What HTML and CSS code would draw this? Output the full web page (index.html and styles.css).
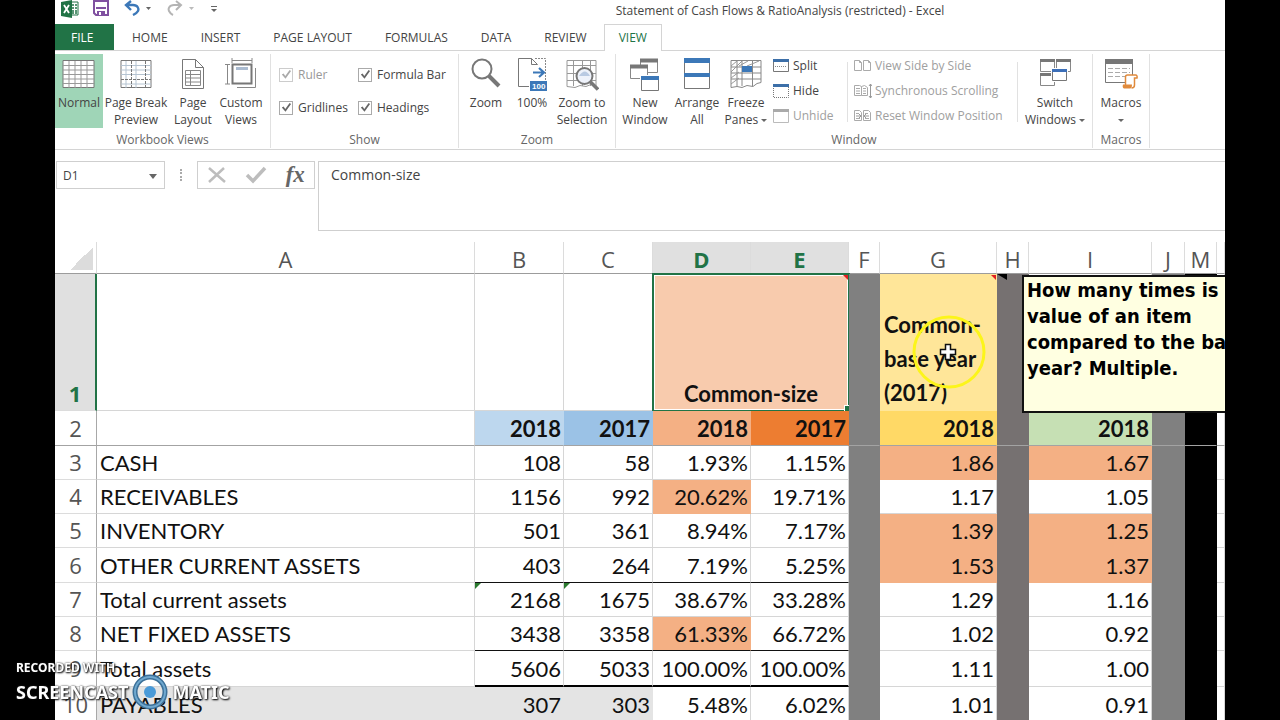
FILE: index.html
```html
<!DOCTYPE html>
<html lang="en">
<head>
    <meta charset="UTF-8">
    <meta name="viewport" content="width=device-width, initial-scale=1.0">
    <title>Statement of Cash Flows &amp; RatioAnalysis (restricted) - Excel</title>
    <link rel="stylesheet" href="styles.css">
</head>
<body>
    <div class="app">
        <!-- Title bar -->
        <header class="titlebar">
            <div class="quick">
                <svg class="logo" width="18" height="18" viewBox="0 0 18 18"><path d="M9 2h8v13H9z" fill="#fff" stroke="#217346"/><path d="M11 5h2m1 0h2m-5 3h2m1 0h2m-5 3h2m1 0h2m-5 2h2m1 0h2" stroke="#217346" stroke-width="1.5"/><path d="M0 2l11-2v18L0 16z" fill="#217346"/><path d="M3 5l5 8M8 5l-5 8" stroke="#fff" stroke-width="1.8"/></svg>
                <button class="qbtn save" aria-label="Save"><svg width="16" height="16" viewBox="0 0 16 16"><path d="M1 1h14v14H3l-2-2z" fill="#fff" stroke="#8050a0" stroke-width="2"/><path d="M3 8h10" stroke="#8050a0" stroke-width="2"/><path d="M4 11h8v4H4z" fill="#8050a0"/><path d="M6 12h2v3H6z" fill="#fff"/></svg></button>
                <button class="qbtn undo" aria-label="Undo"><svg width="28" height="16" viewBox="0 0 28 16"><path d="M7 1L2 5l5 5M2 5h7c5 0 6 4 5 6-1 2-3 3-5 4" fill="none" stroke="#3c78b8" stroke-width="2.4"/><path d="M22 7h5l-2.500 3z" fill="#666"/></svg></button>
                <button class="qbtn redo" aria-label="Redo"><svg width="28" height="16" viewBox="0 0 28 16"><path d="M9 1l5 4-5 5M14 5H7C2 5 1 9 2 11c1 2 2 3 4 4" fill="none" stroke="#b4b4b4" stroke-width="2"/><path d="M22 7h5l-2.500 3z" fill="#bbb"/></svg></button>
                <button class="qbtn" aria-label="Customize toolbar"><svg width="8" height="12" viewBox="0 0 8 12"><path d="M1 5.500h6" stroke="#666"/><path d="M1 8h6l-3 3z" fill="#666"/></svg></button>
            </div>
            <div class="doc-title">Statement of Cash Flows &amp; RatioAnalysis (restricted) - Excel</div>
        </header>

        <!-- Ribbon tabs -->
        <nav class="tabs">
            <a href="#" class="tab file">FILE</a>
            <a href="#" class="tab">HOME</a>
            <a href="#" class="tab">INSERT</a>
            <a href="#" class="tab">PAGE LAYOUT</a>
            <a href="#" class="tab">FORMULAS</a>
            <a href="#" class="tab">DATA</a>
            <a href="#" class="tab">REVIEW</a>
            <a href="#" class="tab active">VIEW</a>
        </nav>

        <!-- View ribbon -->
        <section class="ribbon">
            <div class="group views">
                <div class="tools">
                    <button class="big w48 selected"><svg width="34" height="34" viewBox="0 0 34 34"><path d="M1 2.500h31v27H1z" fill="#fff" stroke="#777"/><path d="M1 7.500h31M1 12h31M1 16.500h31M1 21h31M1 25.500h31M7 3v27M13 3v27M19 3v27M25 3v27" stroke="#999" fill="none"/></svg><span>Normal</span></button>
                    <button class="big w66"><svg width="34" height="34" viewBox="0 0 34 34"><path d="M2 2.500h30v27H2z" fill="#fff" stroke="#777"/><path d="M2 7.500h30M2 12h30M2 16.500h30M2 26h30M7 3v27M17 3v27" stroke="#b5c4d2" fill="none"/><path d="M12.500 3v27M26.500 3v27M2 21.500h30" stroke="#777" fill="none" stroke-dasharray="3 1"/></svg><span>Page Break<br>Preview</span></button>
                    <button class="big w48"><svg width="34" height="34" viewBox="0 0 34 34"><path d="M6.500 1.500h13l8 8v21h-21z" fill="#fff" stroke="#777"/><path d="M19.500 1.500v8h8" fill="none" stroke="#777"/><path d="M9.500 12.500h15v15h-15zM9.500 16.500h15M9.500 20h15M9.500 24h15M14.500 12v16" fill="none" stroke="#888"/></svg><span>Page<br>Layout</span></button>
                    <button class="big w48"><svg width="34" height="34" viewBox="0 0 34 34"><path d="M8.500 6.500h19v19h-19z" fill="#fff" stroke="#777" stroke-width="2"/><path d="M12 10.500h12" stroke="#aabbd0" stroke-width="3"/><path d="M8 2.500h20M8 0v5M28 0v5M3.500 6v20M1 6.500h5M1 26h5M13 29.500h18.500V10" fill="none" stroke="#888"/></svg><span>Custom<br>Views</span></button>
                </div>
                <div class="caption">Workbook Views</div>
            </div>

            <div class="group show">
                <div class="tools checks">
                    <label class="disabled"><input type="checkbox" checked disabled>Ruler</label>
                    <label><input type="checkbox" checked>Formula Bar</label>
                    <label><input type="checkbox" checked>Gridlines</label>
                    <label><input type="checkbox" checked>Headings</label>
                </div>
                <div class="caption">Show</div>
            </div>

            <div class="group zoom">
                <div class="tools">
                    <button class="big w48"><svg width="34" height="34" viewBox="0 0 34 34"><circle cx="13" cy="11" r="9.500" fill="#fff" stroke="#777" stroke-width="2"/><path d="M20 18l10 10" stroke="#777" stroke-width="4"/></svg><span>Zoom</span></button>
                    <button class="big w44"><svg width="34" height="34" viewBox="0 0 34 34"><path d="M14 28.500H3.500V.5h13l6 6" fill="none" stroke="#777"/><path d="M16.500.5v6h6" fill="none" stroke="#777"/><path d="M20 .5h10.500V22" fill="none" stroke="#888" stroke-dasharray="2 1"/><path d="M18 14.500h10M24 10l5 4.500-5 4.500" fill="none" stroke="#3c78b8" stroke-width="2.200"/><path d="M15 23h17v10H15z" fill="#3c78b8"/><text class="hundred" x="17" y="31">100</text></svg><span>100%</span></button>
                    <button class="big w56"><svg width="34" height="34" viewBox="0 0 34 34"><path d="M2 2.500h29v26l-5-2-5 2-6-1-5 2-8-1zM2 7.500h29M2 15.500h29M2 22.500h29M8.500 3v25M17.500 3v25M25.500 3v25" fill="#fff" stroke="#999"/><circle cx="19.500" cy="18" r="8" fill="#eef2fa" stroke="#777" stroke-width="2"/><path d="M14 18q6-9 11 0z" fill="#b9cae2"/><path d="M25 23.500l8 8" stroke="#777" stroke-width="3.500"/></svg><span>Zoom to<br>Selection</span></button>
                </div>
                <div class="caption">Zoom</div>
            </div>

            <div class="group window">
                <div class="tools">
                    <button class="big w52"><svg width="34" height="34" viewBox="0 0 34 34"><path d="M12.500 2.500h17v12h-17z" fill="#fff" stroke="#888"/><path d="M12 .5h18v4H12z" fill="#777"/><path d="M2.500 8.500h17v12h-17z" fill="#fff" stroke="#888"/><path d="M2 6.500h18v4H2z" fill="#777"/><path d="M12 17h20v17H12z" fill="#fff"/><path d="M13.500 19.500h17v13h-17z" fill="#fff" stroke="#777"/><path d="M13 18h18v4H13z" fill="#3c78b8"/></svg><span>New<br>Window</span></button>
                    <button class="big w52"><svg width="34" height="34" viewBox="0 0 34 34"><path d="M4.500 1.500h25v29h-25z" fill="#fff" stroke="#777"/><path d="M4 0h26v5H4zM4 15h26v4H4z" fill="#3c78b8"/></svg><span>Arrange<br>All</span></button>
                    <button class="big w46"><svg width="34" height="34" viewBox="0 0 34 34"><path d="M2 2.500h30v22l-4 1-4 3-6-1-5 2-5-1-6 1zM2 9h30M2 15h30M2 21h30M8 3v25M13 3v25M23.500 3v25" fill="#fff" stroke="#888"/><path d="M2 8l6-5M2 14l11-11M2 20l8-6M2 26l8-6M10 8l9-5M18 8l12-5" stroke="#999"/><path d="M13 8h10v6H13z" fill="#3c78b8"/></svg><span>Freeze<br>Panes <i class="caret"></i></span></button>
                    <div class="small-list narrow">
                        <button class="small"><svg width="16" height="16" viewBox="0 0 16 16"><path d="M.5 2.500h15v11H.5z" fill="#fff" stroke="#777"/><path d="M0 1h16v3H0z" fill="#3c6fa8"/><path d="M2 8.500h12" stroke="#888" stroke-dasharray="1 1"/></svg>Split</button>
                        <button class="small"><svg width="16" height="16" viewBox="0 0 16 16"><path d="M.5 3v11.500h15V3" fill="none" stroke="#777" stroke-dasharray="1 1"/><path d="M0 1h16v3H0z" fill="#3c6fa8"/></svg>Hide</button>
                        <button class="small" disabled><svg width="16" height="16" viewBox="0 0 16 16"><path d="M.5 2.500h15v12H.5z" fill="#fff" stroke="#bbb"/><path d="M0 1h16v3H0z" fill="#aaa"/></svg>Unhide</button>
                    </div>
                    <div class="small-list wide">
                        <button class="small" disabled><svg width="18" height="16" viewBox="0 0 18 16"><path d="M.5 2.500h5l2 2v8h-7zM9.500 2.500h5l2 2v8h-7zM5.500 2.500v2h2M14.500 2.500v2h2" fill="none" stroke="#aaa"/></svg>View Side by Side</button>
                        <button class="small" disabled><svg width="18" height="16" viewBox="0 0 18 16"><path d="M.5 2.500h5l2 1v9h-7zM7.500 3.500l3-1 3 2v8h-6M2 5.500h4M2 8h4M2 10.500h4M9 5.500h3M9 8h3M9 10.500h3" fill="none" stroke="#aaa"/><path d="M16.500 1v14M15 3l1.500-2L18 3M15 13l1.500 2 1.500-2" fill="none" stroke="#999"/></svg>Synchronous Scrolling</button>
                        <button class="small" disabled><svg width="18" height="16" viewBox="0 0 18 16"><path d="M.5 2.500h5l2 2v8h-7zM9.500 2.500h5l2 2v8h-7zM2 5.500h3M2 10.500h4M11 5.500h3M11 10.500h4" fill="none" stroke="#aaa"/><path d="M2 8h5M10 8h5M5 6l2 2-2 2M12 6l-2 2 2 2" fill="none" stroke="#999"/></svg>Reset Window Position</button>
                    </div>
                    <button class="big w74"><svg width="34" height="34" viewBox="0 0 34 34"><path d="M2.500 3.500h14v10h-14zM18.500 3.500h14v10h-14zM2.500 17.500h14v10h-14z" fill="#fff" stroke="#888"/><path d="M2 1h15v3H2zM18 1h15v3H18zM2 15h15v3H2z" fill="#777"/><path d="M13 10h17v14H13z" fill="#fff"/><path d="M14.500 12.500h14v10h-14z" fill="#fff" stroke="#777"/><path d="M14 11h15v3H14z" fill="#3c6fb8"/></svg><span>Switch<br>Windows <i class="caret"></i></span></button>
                </div>
                <div class="caption">Window</div>
            </div>

            <div class="group macros">
                <div class="tools">
                    <button class="big w56"><svg width="34" height="34" viewBox="0 0 34 34"><path d="M1.500 3.500h27v21h-27z" fill="#fff" stroke="#777"/><path d="M1 1h28v5H1z" fill="#777"/><path d="M4 10.500h22M4 14.500h22M4 18.500h22" stroke="#aaa" stroke-dasharray="5 2"/><path d="M21 17h11q2 0 2 3h-3v8q0 3-3 3h-6z" fill="#fff"/><path d="M21.500 27V19q0-2 2-2h8q2 0 1.500 3h-2.500v7q0 3-3 3" fill="#fff" stroke="#e08a3c" stroke-width="1.500"/><path d="M19 26.500h9q0 4-2 4h-6q-2-1-1-4z" fill="#e08a3c"/></svg><span>Macros<br><i class="caret"></i></span></button>
                </div>
                <div class="caption">Macros</div>
            </div>
        </section>

        <!-- Formula bar -->
        <section class="formula-row">
            <div class="namebox">
                <input type="text" value="D1" aria-label="Name box">
                <button aria-label="Open name list"><i class="caret"></i></button>
            </div>
            <div class="grip"></div>
            <div class="fx-box">
                <button aria-label="Cancel"><svg width="20" height="20" viewBox="0 0 20 20"><path d="M2 3l16 14M17 3L2 17" stroke="#bdbdbd" stroke-width="2.500"/></svg></button>
                <button aria-label="Enter"><svg width="22" height="20" viewBox="0 0 22 20"><path d="M2 10l6 6L20 3" fill="none" stroke="#bdbdbd" stroke-width="3.500"/></svg></button>
                <button class="fx" aria-label="Insert function">fx</button>
            </div>
            <textarea class="formula" aria-label="Formula">Common-size</textarea>
        </section>

        <!-- Worksheet -->
        <table class="sheet">
            <colgroup>
                <col class="c-row"><col><col class="c-bc"><col class="c-bc"><col class="c-de"><col class="c-de">
                <col class="c-f"><col class="c-g"><col class="c-h"><col class="c-i"><col class="c-j"><col class="c-h"><col class="c-n">
            </colgroup>
            <thead>
                <tr>
                    <th class="corner"></th>
                    <th>A</th><th>B</th><th>C</th><th class="on">D</th><th class="on">E</th>
                    <th>F</th><th>G</th><th>H</th><th>I</th><th>J</th><th>M</th><th></th>
                </tr>
            </thead>
            <tbody>
                <tr class="r1">
                    <th class="on">1</th>
                    <td></td><td></td><td></td>
                    <td colspan="2" class="picked">Common-size<span class="selection"></span><span class="note-mark"></span></td>
                    <td class="gap"></td>
                    <td class="base-head">Common-<br>base year<br>(2017)<span class="note-mark"></span>
                        <svg class="pointer" width="76" height="76" viewBox="0 0 76 76"><circle cx="38" cy="38" r="35" fill="none" stroke="#fcf51a" stroke-width="3"/><path d="M34.500 30.500h5v5h5v5h-5v5h-5v-5h-5v-5h5z" fill="#fff" stroke="#111" stroke-width="1.500"/></svg>
                    </td>
                    <td class="gap dark"><span class="arrow"></span><div class="note">How many times is<br>value of an item<br>compared to the ba<br>year? Multiple.</div></td>
                    <td></td><td class="gap"></td><td class="black"></td><td></td>
                </tr>
                <tr class="r2">
                    <th>2</th><td></td>
                    <td class="blue1">2018</td><td class="blue2">2017</td><td class="orange1">2018</td><td class="orange2">2017</td>
                    <td class="gap"></td><td class="gold">2018</td><td class="gap dark"></td><td class="green">2018</td>
                    <td class="gap"></td><td class="black"></td><td></td>
                </tr>
                <tr>
                    <th>3</th><td>CASH</td><td>108</td><td>58</td><td>1.93%</td><td>1.15%</td>
                    <td class="gap"></td><td class="hot">1.86</td><td class="gap dark"></td><td class="hot">1.67</td>
                    <td class="gap"></td><td class="black"></td><td></td>
                </tr>
                <tr>
                    <th>4</th><td>RECEIVABLES</td><td>1156</td><td>992</td><td class="hot">20.62%</td><td>19.71%</td>
                    <td class="gap"></td><td>1.17</td><td class="gap dark"></td><td>1.05</td>
                    <td class="gap"></td><td class="black"></td><td></td>
                </tr>
                <tr>
                    <th>5</th><td>INVENTORY</td><td>501</td><td>361</td><td>8.94%</td><td>7.17%</td>
                    <td class="gap"></td><td class="hot">1.39</td><td class="gap dark"></td><td class="hot">1.25</td>
                    <td class="gap"></td><td class="black"></td><td></td>
                </tr>
                <tr class="tall">
                    <th>6</th><td>OTHER CURRENT ASSETS</td><td class="line">403</td><td class="line">264</td><td class="line">7.19%</td><td class="line">5.25%</td>
                    <td class="gap"></td><td class="hot">1.53</td><td class="gap dark"></td><td class="hot">1.37</td>
                    <td class="gap"></td><td class="black"></td><td></td>
                </tr>
                <tr>
                    <th>7</th><td>Total current assets</td><td class="check">2168</td><td class="check">1675</td><td>38.67%</td><td>33.28%</td>
                    <td class="gap"></td><td>1.29</td><td class="gap dark"></td><td>1.16</td>
                    <td class="gap"></td><td class="black"></td><td></td>
                </tr>
                <tr>
                    <th>8</th><td>NET FIXED ASSETS</td><td class="line">3438</td><td class="line">3358</td><td class="hot line">61.33%</td><td class="line">66.72%</td>
                    <td class="gap"></td><td>1.02</td><td class="gap dark"></td><td>0.92</td>
                    <td class="gap"></td><td class="black"></td><td></td>
                </tr>
                <tr class="total">
                    <th>9</th><td>Total assets</td><td class="thick">5606</td><td class="thick">5033</td><td class="thick">100.00%</td><td class="thick">100.00%</td>
                    <td class="gap"></td><td>1.11</td><td class="gap dark"></td><td>1.00</td>
                    <td class="gap"></td><td class="black"></td><td></td>
                </tr>
                <tr class="total">
                    <th>10</th><td class="shade">PAYABLES</td><td class="shade">307</td><td class="shade">303</td><td>5.48%</td><td>6.02%</td>
                    <td class="gap"></td><td>1.01</td><td class="gap dark"></td><td>0.91</td>
                    <td class="gap"></td><td class="black"></td><td></td>
                </tr>
            </tbody>
        </table>
    </div>

    <!-- Recorder watermark -->
    <div class="watermark">
        <div class="recorded">RECORDED WITH</div>
        <div class="brand">SCREENCAST<svg width="36" height="36" viewBox="0 0 36 36"><circle cx="18" cy="18" r="15" fill="none" stroke="#3d7199" stroke-width="5"/><circle cx="18" cy="18" r="15" fill="none" stroke="#6fa8cf" stroke-width="2"/><circle cx="18" cy="18" r="6" fill="#4a9ad8"/></svg>MATIC</div>
    </div>
</body>
</html>
```
FILE: styles.css
```css
* {
    box-sizing: border-box;
}

body {
    margin: 0;
    padding: 0 55px;
    height: 100vh;
    overflow: hidden;
    background: #000;
    color: #444;
    font-family: "Open Sans", "Noto Sans", sans-serif;
    font-size: 12px;
}

button {
    font: inherit;
    color: inherit;
    background: none;
    border: none;
    padding: 0;
}

.app {
    height: 100%;
    overflow: hidden;
    background: #fff;
}

/* title bar */
.titlebar {
    display: flex;
    height: 24px;
}

.quick {
    display: flex;
    align-items: flex-start;
    width: 280px;
    padding-left: 6px;
}

.logo {
    margin-right: 14px;
}

.qbtn {
    height: 16px;
    margin-right: 15px;
}

.doc-title {
    flex: 1;
    text-align: center;
    line-height: 21px;
}

/* tabs */
.tabs {
    display: flex;
    gap: 1px;
    height: 27px;
    border-bottom: 1px solid #d4d4d4;
}

.tab {
    height: 27px;
    padding: 0 16px;
    line-height: 27px;
    color: #444;
    text-decoration: none;
}

.tab.file {
    height: 26px;
    width: 59px;
    margin-right: 1px;
    background: #217346;
    color: #fff;
}

.tab.active {
    padding: 0 14px;
    background: #fff;
    border: 1px solid #d4d4d4;
    border-bottom: none;
    color: #217346;
    line-height: 25px;
}

/* ribbon */
.ribbon {
    display: flex;
    height: 99px;
    border-bottom: 1px solid #d4d4d4;
}

.group {
    flex: none;
    display: flex;
    flex-direction: column;
    height: 94px;
    margin-top: 3px;
    border-right: 1px solid #e1e1e1;
}

.tools {
    display: flex;
    height: 78px;
}

.caption {
    text-align: center;
    line-height: 17px;
    color: #666;
}

.views { width: 216px; }
.show { width: 188px; }
.zoom { width: 157px; }
.window { width: 477px; }
.macros { width: 57px; }

.zoom .tools,
.window .tools {
    padding-left: 3px;
}

.big {
    display: flex;
    flex-direction: column;
    align-items: center;
    height: 74px;
    padding-top: 4px;
    line-height: 17px;
    white-space: nowrap;
}

.big svg {
    flex: none;
    margin-bottom: 2px;
}

.selected {
    background: #9fd5b7;
}

.w44 { width: 44px; }
.w46 { width: 46px; }
.w48 { width: 48px; }
.w52 { width: 52px; }
.w56 { width: 56px; }
.w66 { width: 66px; }
.w74 { width: 74px; }

.hundred {
    font: bold 8px "Liberation Sans", sans-serif;
    fill: #fff;
}

.caret {
    display: inline-block;
    vertical-align: middle;
    border: 3px solid transparent;
    border-top-color: #666;
    border-bottom: none;
}

.checks {
    display: grid;
    grid-template-columns: 79px 1fr;
    grid-template-rows: 33px 33px;
    padding: 4px 0 0 8px;
}

.checks label {
    display: flex;
    align-items: center;
    gap: 5px;
    white-space: nowrap;
}

.checks .disabled {
    color: #999;
}

.checks input {
    appearance: none;
    width: 14px;
    height: 14px;
    margin: 0;
    border: 1px solid #aaa;
    background: #fff;
}

.checks input::before {
    content: "";
    display: block;
    width: 12px;
    height: 12px;
    background: #666;
    clip-path: polygon(15% 50%, 30% 42%, 44% 62%, 80% 12%, 92% 20%, 46% 85%);
}

.checks input:disabled {
    border-color: #ccc;
}

.checks input:disabled::before {
    background: #aaa;
}

.small-list {
    height: 74px;
    margin: -1px 0 0 4px;
}

.narrow { width: 74px; }

.wide {
    width: 171px;
    height: 60px;
    margin: 8px 0 0;
    padding: 0 0 0 6px;
    border-left: 1px solid #e1e1e1;
    border-right: 1px solid #e1e1e1;
}

.wide .small {
    gap: 3px;
}

.wide .small:first-child {
    margin-top: -9px;
}

.small {
    display: flex;
    align-items: center;
    gap: 4px;
    height: 25px;
    white-space: nowrap;
}

.small:disabled {
    color: #a0a0a0;
}

/* formula bar */
.formula-row {
    display: flex;
    align-items: flex-start;
    padding: 11px 0 11px 1px;
}

.namebox {
    display: flex;
    width: 109px;
    height: 28px;
    border: 1px solid #cfcfcf;
}

.namebox input {
    flex: 1;
    min-width: 0;
    border: none;
    padding: 0 6px;
    font: inherit;
    color: #444;
}

.namebox button {
    width: 22px;
}

.namebox .caret {
    border-width: 5px 4px 0;
}

.grip {
    width: 2px;
    height: 12px;
    margin: 8px 15px;
    border-left: 2px dotted #aaa;
}

.fx-box {
    display: flex;
    align-items: center;
    justify-content: space-around;
    width: 118px;
    height: 28px;
    margin-right: 3px;
    border: 1px solid #cfcfcf;
}

.fx-box svg {
    display: block;
}

.fx {
    font: italic bold 23px/24px "Liberation Serif", serif;
    color: #666;
}

.formula {
    flex: 1;
    height: 70px;
    padding: 4px 12px;
    border: 1px solid #cfcfcf;
    border-right: none;
    resize: none;
    font: 14px/18px "Open Sans", sans-serif;
    color: #444;
}

/* worksheet */
.sheet {
    width: 100%;
    table-layout: fixed;
    border-spacing: 0;
    font-family: Lato, sans-serif;
    font-size: 22px;
    line-height: 33px;
    color: #111;
}

.c-row { width: 42px; }
.c-bc { width: 89px; }
.c-de { width: 98px; }
.c-f { width: 31px; }
.c-g { width: 117px; }
.c-h { width: 32px; }
.c-i { width: 123px; }
.c-j { width: 33px; }
.c-n { width: 8px; }

.sheet th {
    padding: 0;
    border-right: 1px solid #dcdcdc;
    border-bottom: 1px solid #dcdcdc;
    font-family: "Open Sans", "Noto Sans", sans-serif;
    font-size: 22px;
    font-weight: normal;
    color: #555;
}

.sheet thead th {
    height: 32px;
    padding-top: 4px;
    line-height: 27px;
    border-bottom-color: #9c9c9c;
}

.sheet tbody th {
    border-right-color: #a8a8a8;
}

.sheet th.on {
    background: #e0e0e0;
    color: #217346;
    font-weight: bold;
}

.sheet thead .on {
    border-bottom-color: #217346;
}

.corner {
    background: linear-gradient(135deg, transparent 50%, #dcdcdc 50%) 14px 6px / 24px 22px no-repeat;
}

.sheet td {
    position: relative;
    height: 34px;
    padding: 0 2px 0 3px;
    border-right: 1px solid #d6d6d6;
    border-bottom: 1px solid #d6d6d6;
    text-align: right;
    white-space: nowrap;
}

.sheet td:nth-child(2) {
    text-align: left;
}

.r1 td,
.r1 th {
    height: 137px;
    vertical-align: bottom;
}

.sheet .r1 th {
    border-right: 2px solid #217346;
}

.sheet .r2 td,
.sheet .r2 th {
    height: 35px;
    border-bottom-color: #a3a3a3;
    font-weight: bold;
}

.sheet .r2 th {
    font-weight: normal;
}

.tall td {
    height: 35px;
}

.total td {
    height: 36px;
}

.sheet .picked {
    background: #f8cbad;
    text-align: center;
    font-weight: bold;
}

.selection {
    position: absolute;
    inset: -1px -2px -2px -1px;
    border: 2px solid #217346;
    box-shadow: inset 0 0 0 1px #fff;
}

.selection::after {
    content: "";
    position: absolute;
    right: -3px;
    bottom: -3px;
    width: 6px;
    height: 6px;
    background: #217346;
    border: 1px solid #fff;
    border-right: none;
}

.note-mark {
    position: absolute;
    top: 1px;
    right: 0;
    border-top: 5px solid #e02020;
    border-left: 5px solid transparent;
}

.sheet .base-head {
    padding-left: 4px;
    background: #ffe699;
    border-color: #ffe699;
    text-align: left;
    font-weight: bold;
    line-height: 34px;
}

.pointer {
    position: absolute;
    left: 31px;
    top: 40px;
}

.arrow {
    position: absolute;
    left: 0;
    top: 0;
    border-top: 6px solid #000;
    border-left: 10px solid transparent;
}

.note {
    position: absolute;
    z-index: 1;
    left: 25px;
    top: 1px;
    width: 260px;
    height: 138px;
    padding: 0 3px;
    border: 2px solid #111;
    background: #ffffe1;
    color: #000;
    text-align: left;
    font: bold 20px/26px "DejaVu Sans Condensed", "DejaVu Sans", sans-serif;
}

.sheet .gap {
    background: #808080;
    border-right-color: transparent;
    border-bottom-color: transparent;
}

.sheet .dark {
    background: #767171;
}

.sheet .black {
    background: #000;
    border-color: #000;
}

.sheet .blue1 { background: #bdd7ee; border-right-color: #bdd7ee; }
.sheet .blue2 { background: #9bc2e6; border-right-color: #9bc2e6; }
.sheet .orange1 { background: #f4b084; border-right-color: #f4b084; }
.sheet .orange2 { background: #ed7d31; border-right-color: #ed7d31; }
.sheet .gold { background: #ffd966; border-right-color: #ffd966; }
.sheet .green { background: #c6e0b4; border-right-color: #c6e0b4; }

.sheet .hot {
    background: #f4b084;
    border-color: #f4b084;
}

.sheet .shade {
    background: #e4e4e4;
    border-color: #e4e4e4;
}

.sheet .line {
    border-bottom-color: #111;
}

.sheet .thick {
    border-bottom: 2px solid #000;
}

.check::before {
    content: "";
    position: absolute;
    left: 0;
    top: 0;
    border-top: 6px solid #2a7a2f;
    border-right: 6px solid transparent;
}

/* watermark */
.watermark {
    position: fixed;
    left: 16px;
    bottom: 11px;
    color: #fff;
    font-family: "Noto Sans", sans-serif;
    font-weight: bold;
    text-shadow: 1px 1px 2px #000, 0 0 2px #333;
}

.recorded {
    font-size: 12px;
    line-height: 14px;
}

.brand {
    display: flex;
    align-items: center;
    gap: 4px;
    font-size: 18px;
    height: 34px;
}
```
